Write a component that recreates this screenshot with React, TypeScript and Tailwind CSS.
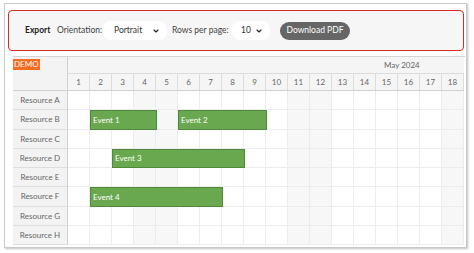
import { ChevronDown } from "lucide-react";

const days = Array.from({ length: 18 }, (_, i) => i + 1);
const resources = ["A", "B", "C", "D", "E", "F", "G", "H"].map((l) => `Resource ${l}`);
const weekend = [4, 5, 11, 12, 18];

type Ev = { name: string; row: number; start: number; len: number };
const events: Ev[] = [
  { name: "Event 1", row: 1, start: 2, len: 3 },
  { name: "Event 2", row: 1, start: 6, len: 4 },
  { name: "Event 3", row: 3, start: 3, len: 6 },
  { name: "Event 4", row: 5, start: 2, len: 6 },
];

const CELL = 22;
const ROW = 19.25;

function Select({ value, width }: { value: string; width: string }) {
  return (
    <div
      className={`flex h-[19px] items-center justify-between rounded-[8px] bg-white pr-[7px] text-[8.5px] text-[#333] ${width}`}
    >
      <span>{value}</span>
      <ChevronDown size={8} strokeWidth={3.5} className="text-[#222]" />
    </div>
  );
}

export default function App() {
  return (
    <div className="h-[253px] w-[474px] bg-white pl-[4px] pt-[3px] font-['Lato','Open_Sans',sans-serif]">
      <div className="flex h-[245px] w-[463px] flex-col border border-[#c9c9c9] bg-white pl-[3px] pt-[6px] shadow-[1px_1px_2px_rgba(0,0,0,0.25)]">
        {/* toolbar */}
        <div className="flex h-[41px] w-[456px] items-center whitespace-nowrap rounded-[4px] border-[1.5px] border-[#d42a2a] bg-[#f6f6f6] pl-[16px] text-[8.5px] text-[#444]">
          <span className="w-[26px] shrink-0 font-bold text-[#222]">Export</span>
          <span className="ml-[6px] w-[40px] shrink-0">Orientation:</span>
          <div className="ml-[6px] shrink-0">
            <Select value="Portrait" width="w-[64px] pl-[11px]" />
          </div>
          <span className="ml-[5px] w-[55px] shrink-0">Rows per page:</span>
          <div className="ml-[5px] shrink-0">
            <Select value="10" width="w-[38px] pl-[9px]" />
          </div>
          <button
            type="button"
            className="ml-[10px] h-[18px] w-[70px] shrink-0 rounded-full bg-[#666] text-[8.5px] text-white"
          >
            Download PDF
          </button>
        </div>

        {/* scheduler */}
        <div className="ml-[5px] mt-[5px] flex w-[452px] border-t border-[#d5d5d5] text-[8px] text-[#666]">
          {/* row headers */}
          <div className="w-[55px] border-r border-[#d0d0d0] bg-[#f3f3f3]">
            <div className="h-[34px] border-b border-[#d0d0d0] pt-px">
              <span className="inline-block bg-[#f36c21] px-[1px] text-[8px] leading-[11px] text-white">
                DEMO
              </span>
            </div>
            {resources.map((r) => (
              <div
                key={r}
                className="flex items-center justify-center border-b border-[#dedede]"
                style={{ height: ROW }}
              >
                {r}
              </div>
            ))}
          </div>

          {/* timeline */}
          <div className="w-[396px]">
            <div className="h-[34px] border-b border-[#d0d0d0] bg-[#f5f5f5]">
              <div className="flex h-[17px] items-center border-b border-[#dcdcdc] pl-[316px]">May 2024</div>
              <div className="flex h-[16px]">
                {days.map((d) => (
                  <div
                    key={d}
                    className="flex h-full w-[22px] shrink-0 items-center justify-center border-r border-[#dcdcdc]"
                  >
                    {d}
                  </div>
                ))}
              </div>
            </div>
            <div className="relative">
              {resources.map((r) => (
                <div key={r} className="flex border-b border-[#ececec]" style={{ height: ROW }}>
                  {days.map((d) => (
                    <div
                      key={d}
                      className={`w-[22px] shrink-0 border-r border-[#ececec] ${
                        weekend.includes(d) ? "bg-[#f7f7f7]" : "bg-white"
                      }`}
                    />
                  ))}
                </div>
              ))}
              {events.map((e) => (
                <div
                  key={e.name}
                  className="absolute flex items-center border border-[#4f8a3a] bg-[#6aa84f] pl-[2px] text-[8px] text-white"
                  style={{
                    left: (e.start - 1) * CELL,
                    width: e.len * CELL + 1,
                    top: e.row * ROW,
                    height: ROW,
                  }}
                >
                  {e.name}
                </div>
              ))}
            </div>
          </div>
        </div>
      </div>
    </div>
  );
}
